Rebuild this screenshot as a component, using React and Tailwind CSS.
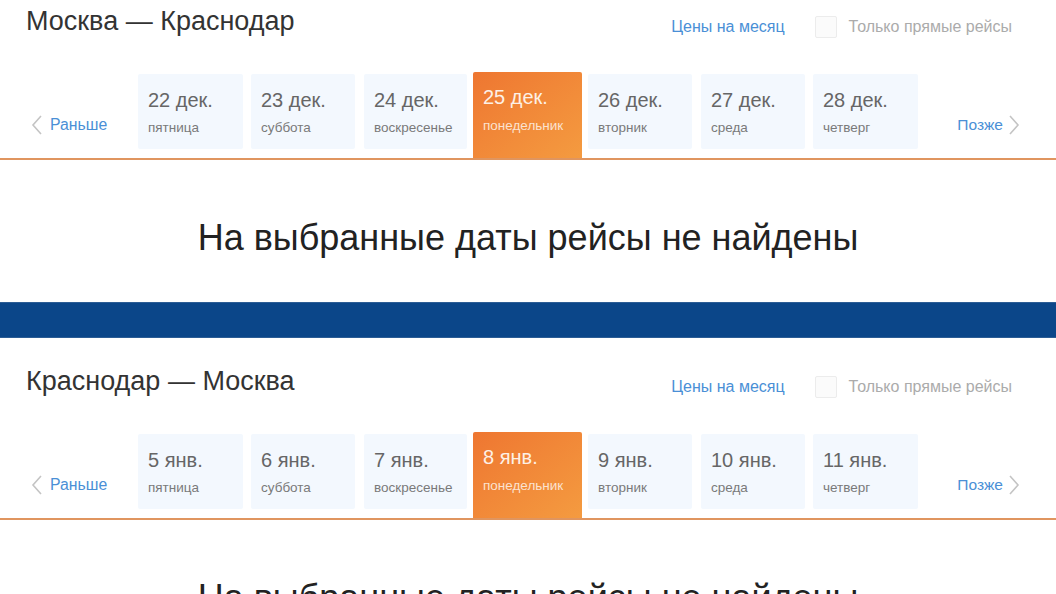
import React from "react";

const font = { fontFamily: '"Liberation Sans", Arial, sans-serif' };

const Chevron = ({ dir }) => (
  <svg width="12" height="20" viewBox="0 0 12 20" className="shrink-0">
    <path
      d={dir === "left" ? "M10 1 L2 10 L10 19" : "M2 1 L10 10 L2 19"}
      fill="none"
      stroke="#c4c4c4"
      strokeWidth="1.6"
    />
  </svg>
);

const tileLayout = [
  "ml-0 w-[105px]",
  "ml-[8px] w-[104px]",
  "ml-[9px] w-[103px]",
  "ml-[6px] w-[109px]",
  "ml-[6px] w-[104px]",
  "ml-[9px] w-[104px]",
  "ml-[8px] w-[105px]",
];

const weekdays = [
  "пятница",
  "суббота",
  "воскресенье",
  "понедельник",
  "вторник",
  "среда",
  "четверг",
];

function Section({ title, dates, first }) {
  return (
    <div className={"h-[324px] bg-white px-[26px] pt-[27px] " + (first ? "-mt-[22px]" : "")}>
      <div className="flex h-[33px] items-start">
        <div className="text-[27px] leading-[32px] text-[#333]">{title}</div>
        <div className="ml-auto mr-[18px] mt-[11px] flex h-[22px] items-center">
          <span className="text-[16px] text-[#4a8fd6]">Цены на месяц</span>
          <span className="ml-[30px] h-[22px] w-[22px] rounded-[2px] border border-[#ececec] bg-[#fbfbfb]" />
          <span className="ml-[12px] text-[16px] text-[#ababab]">Только прямые рейсы</span>
        </div>
      </div>
      <div className="ml-[5px] mt-[34px] flex h-[86px] items-start">
        <div className="mt-[43px] flex h-[20px] w-[107px] items-center">
          <Chevron dir="left" />
          <span className="ml-[7px] text-[15.8px] text-[#4a8fd6]">Раньше</span>
        </div>
        {dates.map((d, i) => {
          const sel = i === 3;
          return (
            <div
              key={i}
              className={
                tileLayout[i] +
                (sel
                  ? " h-[86px] rounded-t-[2px] bg-gradient-to-br from-[#ee7631] to-[#f49b40] pl-[10px] pt-[13px]"
                  : " mt-[2px] h-[75px] rounded-[2px] bg-[#f3f8fe] pl-[10px] pt-[14px]")
              }
            >
              <div
                className={
                  "text-[20px] leading-[24px] " + (sel ? "text-[#fdf0e6]" : "text-[#666]")
                }
              >
                {d}
              </div>
              <div
                className={
                  "text-[13.5px] leading-[16px] " +
                  (sel ? "mt-[9px] text-[#fbe2cf]" : "mt-[8px] text-[#7a7a7a]")
                }
              >
                {weekdays[i]}
              </div>
            </div>
          );
        })}
        <div className="mt-[43px] flex h-[20px] w-[102px] items-center justify-end">
          <span className="mr-[5px] text-[15.5px] text-[#4a8fd6]">Позже</span>
          <Chevron dir="right" />
        </div>
      </div>
      <div className="-mx-[26px] h-[2px] bg-[#e0955f]" />
      <div className="mt-[58px] text-center text-[36px] leading-[40px] text-[#222]">
        На выбранные даты рейсы не найдены
      </div>
    </div>
  );
}

export default function App() {
  return (
    <div className="h-[594px] w-[1056px] overflow-hidden bg-white" style={font}>
      <Section
        first
        title="Москва — Краснодар"
        dates={["22 дек.", "23 дек.", "24 дек.", "25 дек.", "26 дек.", "27 дек.", "28 дек."]}
      />
      <div className="h-[36px] border-y border-[#2c5d95] bg-[#0b4689]" />
      <Section
        title="Краснодар — Москва"
        dates={["5 янв.", "6 янв.", "7 янв.", "8 янв.", "9 янв.", "10 янв.", "11 янв."]}
      />
    </div>
  );
}
